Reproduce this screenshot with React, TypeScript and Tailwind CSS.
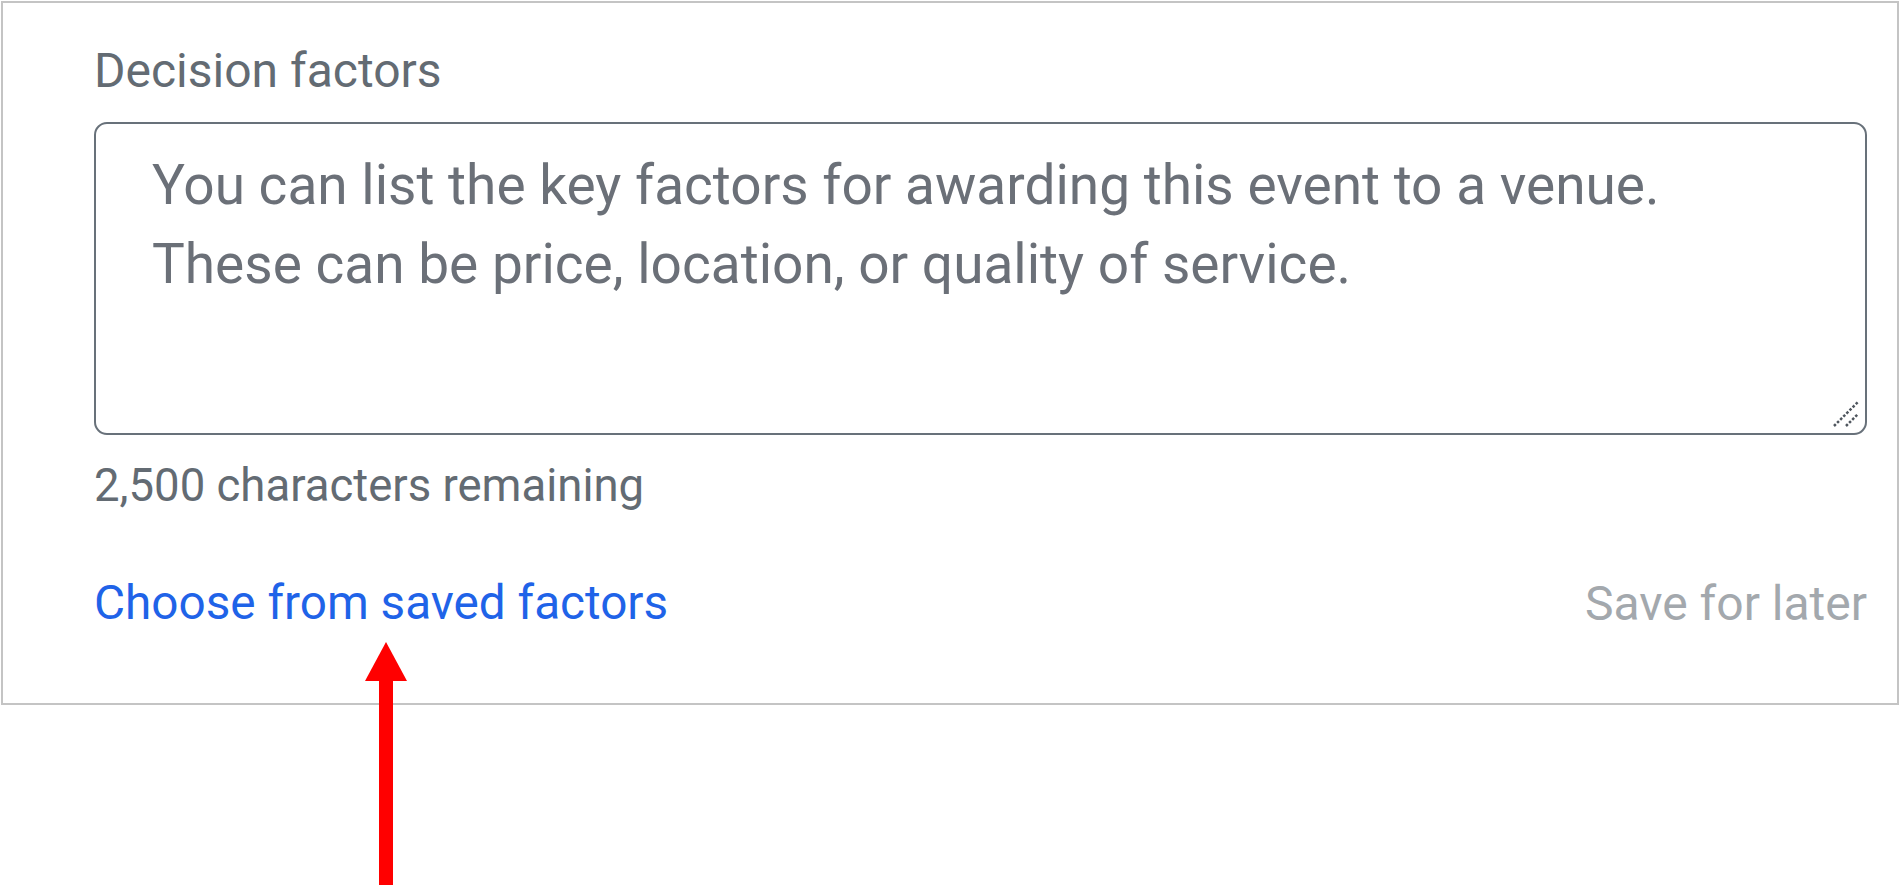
import React from 'react';

const font = { fontFamily: 'Roboto, "Liberation Sans", sans-serif' };

const ResizeGrip: React.FC = () => (
    <svg className="absolute right-[7px] bottom-[7px] pointer-events-none" width="28" height="28" viewBox="0 0 28 28">
        <path d="M2 26 L26 2 M14 26 L26 14" stroke="#4f565e" strokeWidth="2.5" strokeDasharray="2.6 1.8" />
    </svg>
);

const App: React.FC = () => {
    return (
        <div className="relative w-full h-[885px] bg-white overflow-hidden" style={font}>
            <section className="mx-[1px] mt-[1px] border-2 border-[#c4c4c4] pl-[91px] pr-[30px] pt-[39px] pb-[70px]">
                <label className="block text-[48px] leading-[1.2] text-[#636b73]">Decision factors</label>

                <div className="relative mt-[22px]">
                    <textarea
                        className="block w-full h-[313px] resize-none rounded-[13px] border-[2.5px] border-[#68717a] pl-[56px] pr-6 pt-[22px] text-[55px] leading-[79px] text-[#636b73] placeholder:text-[#6b7078] outline-none"
                        placeholder={'You can list the key factors for awarding this event to a venue.\nThese can be price, location, or quality of service.'}
                    />
                    <ResizeGrip />
                </div>

                <p className="mt-[24px] text-[45.5px] leading-[1.2] text-[#636b73]">2,500 characters remaining</p>

                <div className="mt-[62px] flex items-center justify-between text-[48px] leading-[1.2]">
                    <a href="#" className="text-[47.7px] text-[#1f63e8]">Choose from saved factors</a>
                    <button type="button" className="text-[#a3a8ad]">Save for later</button>
                </div>
            </section>

            {/* annotation arrow */}
            <svg className="absolute left-[364px] top-[642px]" width="44" height="243" viewBox="0 0 44 243">
                <polygon points="22,0 43,39 1,39" fill="#ff0000" />
                <rect x="15" y="38" width="14" height="205" fill="#ff0000" />
            </svg>
        </div>
    );
};

export default App;
